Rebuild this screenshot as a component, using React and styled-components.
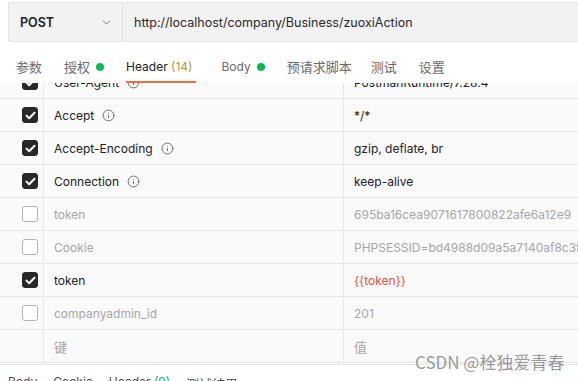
import React from "react";
import styled, { createGlobalStyle } from "styled-components";
import { Info, ChevronDown } from "lucide-react";

const GlobalStyle = createGlobalStyle`
  html, body {
    margin: 0;
    padding: 0;
    background: #ffffff;
    font-family: "Inter", "Noto Sans CJK SC", sans-serif;
    color: #212121;
    overflow: hidden;
  }
`;

const Page = styled.div`
  position: relative;
  width: 578px;
  height: 381px;
  overflow: hidden;
  background: #ffffff;
  font-size: 12px;
`;

const Cjk = styled.span`
  font-family: "Noto Sans CJK SC", sans-serif;
  font-size: 13px;
`;

const RequestBar = styled.div`
  display: flex;
  height: 38px;
  margin: 2px 0 0 8px;
  background: #f2f2f2;
  border: 1px solid #e4e4e4;
  border-right: none;
  border-radius: 3px 0 0 3px;
`;

const MethodSelect = styled.div`
  width: 114px;
  box-sizing: border-box;
  padding: 0 9px 0 11px;
  display: flex;
  align-items: center;
  justify-content: space-between;
  border-right: 1px solid #e0e0e0;
  font-size: 12.5px;
  font-weight: 600;
  color: #212121;
`;

const UrlInput = styled.div`
  flex: 1;
  display: flex;
  align-items: center;
  padding-left: 11px;
  font-size: 12.5px;
  color: #2a2a2a;
  white-space: nowrap;
`;

const TabStrip = styled.div`
  display: flex;
  height: 41px;
  padding-left: 16px;
  gap: 22px;
`;

const Tab = styled.div`
  display: flex;
  align-items: center;
  gap: 6px;
  color: ${(p) => (p.$active ? "#212121" : "#6b6b6b")};
  border-bottom: 2px solid ${(p) => (p.$active ? "#f26b3a" : "transparent")};
  box-sizing: border-box;
  padding: 10px ${(p) => (p.$active ? 4 : 0)}px 0 0;
  margin-left: ${(p) => p.$shift || 0}px;
  white-space: nowrap;
`;

const Count = styled.span`
  color: ${(p) => p.$color};
`;

const Dot = styled.span`
  width: 8px;
  height: 8px;
  border-radius: 50%;
  background: #0cbb52;
`;

const TableViewport = styled.div`
  height: 281px;
  overflow: hidden;
  background: #fafafa;
  border-bottom: 1px solid #e6e6e6;
`;

const TableInner = styled.div`
  margin-top: -17px;
`;

const Row = styled.div`
  display: grid;
  grid-template-columns: 44px 300px 1fr;
  height: 33px;
  box-sizing: border-box;
  border-bottom: 1px solid #e6e6e6;
`;

const Cell = styled.div`
  display: flex;
  align-items: center;
  gap: 8px;
  padding-left: 10px;
  white-space: nowrap;
  overflow: hidden;
  border-right: ${(p) => (p.$last ? "none" : "1px solid #e6e6e6")};
  color: ${(p) => p.$color};
`;

const CheckCell = styled.div`
  display: flex;
  align-items: center;
  justify-content: flex-end;
  padding-right: 5px;
  border-right: 1px solid #e6e6e6;
`;

const Box = styled.div`
  width: 16px;
  height: 16px;
  box-sizing: border-box;
  border-radius: 3px;
  display: flex;
  align-items: center;
  justify-content: center;
  background: ${(p) => (p.$checked ? "#282828" : "#ffffff")};
  border: 1px solid ${(p) => (p.$checked ? "#282828" : "#b3b3b3")};
`;

const BottomTabs = styled.div`
  display: flex;
  gap: 16px;
  padding: 9px 0 0 8px;
  color: #505050;
`;

const Watermark = styled.div`
  position: absolute;
  left: 415px;
  top: 349px;
  font-family: "Noto Sans CJK SC", sans-serif;
  font-size: 17px;
  color: rgba(120, 120, 120, 0.75);
  white-space: nowrap;
`;

const Check = () => (
  <svg width="11" height="9" viewBox="0 0 11 9">
    <path d="M1.5 4.6 L4.2 7.2 L9.5 1.8" fill="none" stroke="#fff" strokeWidth="2" strokeLinecap="round" strokeLinejoin="round" />
  </svg>
);

const rows = [
  { key: "User-Agent", value: "PostmanRuntime/7.28.4", on: true, info: true },
  { key: "Accept", value: "*/*", on: true, info: true },
  { key: "Accept-Encoding", value: "gzip, deflate, br", on: true, info: true },
  { key: "Connection", value: "keep-alive", on: true, info: true },
  { key: "token", value: "695ba16cea9071617800822afe6a12e9", on: false },
  { key: "Cookie", value: "PHPSESSID=bd4988d09a5a7140af8c3f1e2b", on: false },
  { key: "token", value: "{{token}}", on: true, variable: true },
  { key: "companyadmin_id", value: "201", on: false },
  { key: <Cjk>键</Cjk>, value: <Cjk>值</Cjk>, placeholder: true },
];

const HeaderRow = ({ row }) => {
  const keyColor = row.placeholder || !row.on ? "#a6a6a6" : "#212121";
  const valueColor = row.variable
    ? "#e2553a"
    : row.placeholder || !row.on
    ? "#a6a6a6"
    : "#212121";
  return (
    <Row>
      <CheckCell>
        {!row.placeholder && <Box $checked={row.on}>{row.on && <Check />}</Box>}
      </CheckCell>
      <Cell $color={keyColor}>
        {row.key}
        {row.info && <Info size={13} color="#6b6b6b" strokeWidth={1.8} />}
      </Cell>
      <Cell $color={valueColor} $last>
        {row.value}
      </Cell>
    </Row>
  );
};

export default function App() {
  return (
    <Page>
      <GlobalStyle />
      <RequestBar>
        <MethodSelect>
          POST
          <ChevronDown size={13} color="#6b6b6b" strokeWidth={1.6} />
        </MethodSelect>
        <UrlInput>http://localhost/company/Business/zuoxiAction</UrlInput>
      </RequestBar>
      <TabStrip>
        <Tab><Cjk>参数</Cjk></Tab>
        <Tab>
          <Cjk>授权</Cjk> <Dot />
        </Tab>
        <Tab $active>
          <span>
            Header <Count $color="#b09a3c">(14)</Count>
          </span>
        </Tab>
        <Tab $shift={3}>
          Body <Dot />
        </Tab>
        <Tab><Cjk>预请求脚本</Cjk></Tab>
        <Tab $shift={-3}><Cjk>测试</Cjk></Tab>
        <Tab><Cjk>设置</Cjk></Tab>
      </TabStrip>
      <TableViewport>
        <TableInner>
          {rows.map((r, i) => (
            <HeaderRow key={i} row={r} />
          ))}
        </TableInner>
      </TableViewport>
      <BottomTabs>
        <span>Body</span>
        <span>Cookie</span>
        <span>
          Header <Count $color="#0cbb52">(9)</Count>
        </span>
        <Cjk>测试结果</Cjk>
      </BottomTabs>
      <Watermark>CSDN @栓独爱青春</Watermark>
    </Page>
  );
}
